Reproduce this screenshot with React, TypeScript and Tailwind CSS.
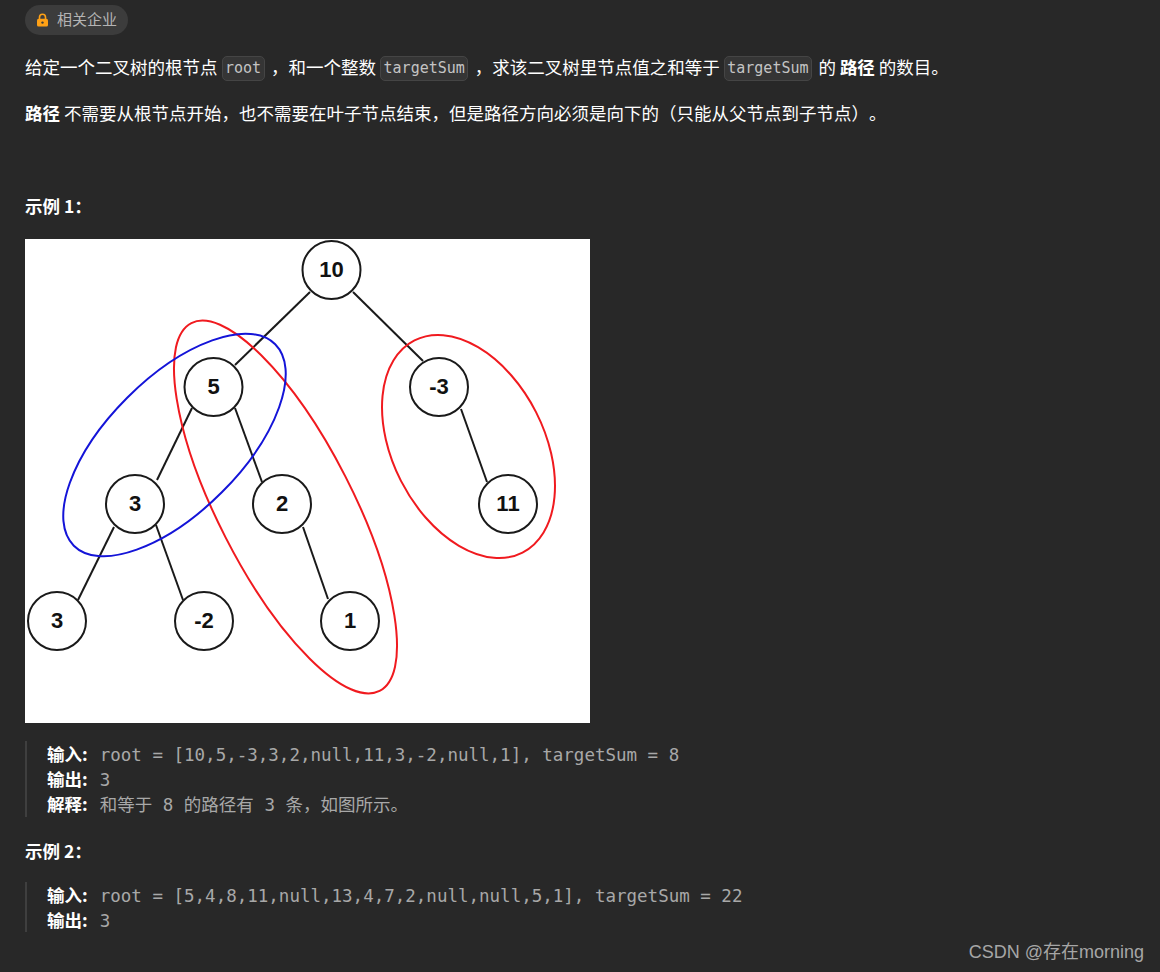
// ============================================================
// 二叉树示意图数据
// ============================================================

const NODES = [
  { id: "a", label: "10", x: 306.5, y: 31 },
  { id: "b", label: "5", x: 188.5, y: 148 },
  { id: "c", label: "-3", x: 414, y: 148 },
  { id: "d", label: "3", x: 110, y: 265 },
  { id: "e", label: "2", x: 257, y: 265 },
  { id: "f", label: "11", x: 483, y: 265 },
  { id: "g", label: "3", x: 32, y: 382 },
  { id: "h", label: "-2", x: 179, y: 382 },
  { id: "i", label: "1", x: 325, y: 382 },
];

// 连线的端点并不在圆心连线上，直接按图取坐标
const EDGES = [
  [285, 53, 210, 126],
  [328, 53, 398, 122],
  [167, 169, 132, 241],
  [210, 169, 237, 243],
  [436, 170, 462, 243],
  [89, 288, 53, 361],
  [131, 286, 158, 361],
  [278, 288, 303, 360],
];

function TreeFigure() {
  return (
    <div className="w-[565px] h-[484px] bg-white mt-[21px]">
      <svg width="565" height="484" viewBox="0 0 565 484">
        {EDGES.map(([x1, y1, x2, y2]) => (
          <line key={`${x1}-${y1}`} x1={x1} y1={y1} x2={x2} y2={y2} stroke="#1a1a1a" strokeWidth="2" />
        ))}
        {NODES.map((n) => (
          <g key={n.id}>
            <circle cx={n.x} cy={n.y} r="29" fill="none" stroke="#1a1a1a" strokeWidth="2" />
            <text
              x={n.x}
              y={n.y + 7}
              textAnchor="middle"
              fill="#111"
              fontSize="22"
              fontWeight="700"
              fontFamily='"Liberation Sans", sans-serif'
            >
              {n.label}
            </text>
          </g>
        ))}
        <ellipse cx="260.5" cy="268" rx="206.6" ry="67.2" transform="rotate(62.9 260.5 268)" fill="none" stroke="#f01a1f" strokeWidth="2" />
        <ellipse cx="149.5" cy="206" rx="142.4" ry="66.9" transform="rotate(-45 149.5 206)" fill="none" stroke="#1414d8" strokeWidth="2" />
        <ellipse cx="443.5" cy="207.5" rx="119" ry="75.8" transform="rotate(63 443.5 207.5)" fill="none" stroke="#f01a1f" strokeWidth="2" />
      </svg>
    </div>
  );
}

// ============================================================
// 行内代码
// ============================================================

function Code({ children }: { children: string }) {
  return (
    <code className="inline-block h-[25px] leading-[23px] px-[2.5px] ml-[4px] mr-[2.5px] rounded-[5px] border border-[#454545] bg-[#353535] text-[#c4c4c4] text-[15px] align-[1px] font-['DejaVu_Sans_Mono','Liberation_Mono',monospace]">
      {children}
    </code>
  );
}

function Example({ lines }: { lines: { label: string; value: string }[] }) {
  return (
    <div className="border-l-2 border-[#3f3f3f] pl-[20px] font-['DejaVu_Sans_Mono','Noto_Sans_CJK_SC',monospace] text-[17.5px] leading-[25.2px] text-[#a8a8a8]">
      {lines.map((l) => (
        <div key={l.label} className="whitespace-pre h-[25.2px]">
          <b className="text-white font-bold mr-[1.5px] font-['Noto_Sans_CJK_SC',sans-serif]">{l.label}:</b> {l.value}
        </div>
      ))}
    </div>
  );
}

function LockIcon() {
  return (
    <svg width="13" height="14" viewBox="0 0 13 14" className="shrink-0">
      <path d="M3.5 6.5V4.2a3 3 0 0 1 6 0v2.3" fill="none" stroke="#ffa116" strokeWidth="1.6" />
      <rect x="1" y="5.8" width="11" height="7.7" rx="1.6" fill="#ffa116" />
      <circle cx="6.5" cy="9.6" r="1.2" fill="#3c3c3c" />
    </svg>
  );
}

export default function App() {
  return (
    <div className="w-[1160px] h-[972px] overflow-hidden relative bg-[#282828] pl-[25px] pt-[5px] text-white font-['Noto_Sans_CJK_SC',sans-serif] text-[17.5px] [text-spacing-trim:space-all]">
      <div className="inline-flex items-center gap-[8px] h-[30px] w-[103px] rounded-full bg-[#3c3c3c] pl-[11px] text-[15px] text-[#b4b4b4]">
        <LockIcon />
        <span className="pb-[2px]">相关企业</span>
      </div>

      <p className="mt-[19px] h-[25px] leading-[25px] whitespace-nowrap">
        给定一个二叉树的根节点<Code>root</Code> ，和一个整数<Code>targetSum</Code> ，求该二叉树里节点值之和等于<Code>targetSum</Code> 的 <b>路径</b> 的数目。
      </p>
      <p className="mt-[21px] h-[25px] leading-[25px] whitespace-nowrap">
        <b>路径</b> 不需要从根节点开始，也不需要在叶子节点结束，但是路径方向必须是向下的（只能从父节点到子节点）。
      </p>

      <p className="mt-[68px] h-[25px] leading-[25px] font-bold">示例 1：</p>
      <TreeFigure />

      <div className="mt-[18px]">
        <Example
          lines={[
            { label: "输入", value: "root = [10,5,-3,3,2,null,11,3,-2,null,1], targetSum = 8" },
            { label: "输出", value: "3" },
            { label: "解释", value: "和等于 8 的路径有 3 条，如图所示。" },
          ]}
        />
      </div>

      <p className="mt-[21px] h-[25px] leading-[25px] font-bold">示例 2：</p>

      <div className="mt-[19px]">
        <Example
          lines={[
            { label: "输入", value: "root = [5,4,8,11,null,13,4,7,2,null,null,5,1], targetSum = 22" },
            { label: "输出", value: "3" },
          ]}
        />
      </div>

      <div className="absolute right-[16px] bottom-[6px] text-[18px] text-[#a6a6a6] font-['Liberation_Sans','Noto_Sans_CJK_SC',sans-serif]">
        CSDN @存在morning
      </div>
    </div>
  );
}
